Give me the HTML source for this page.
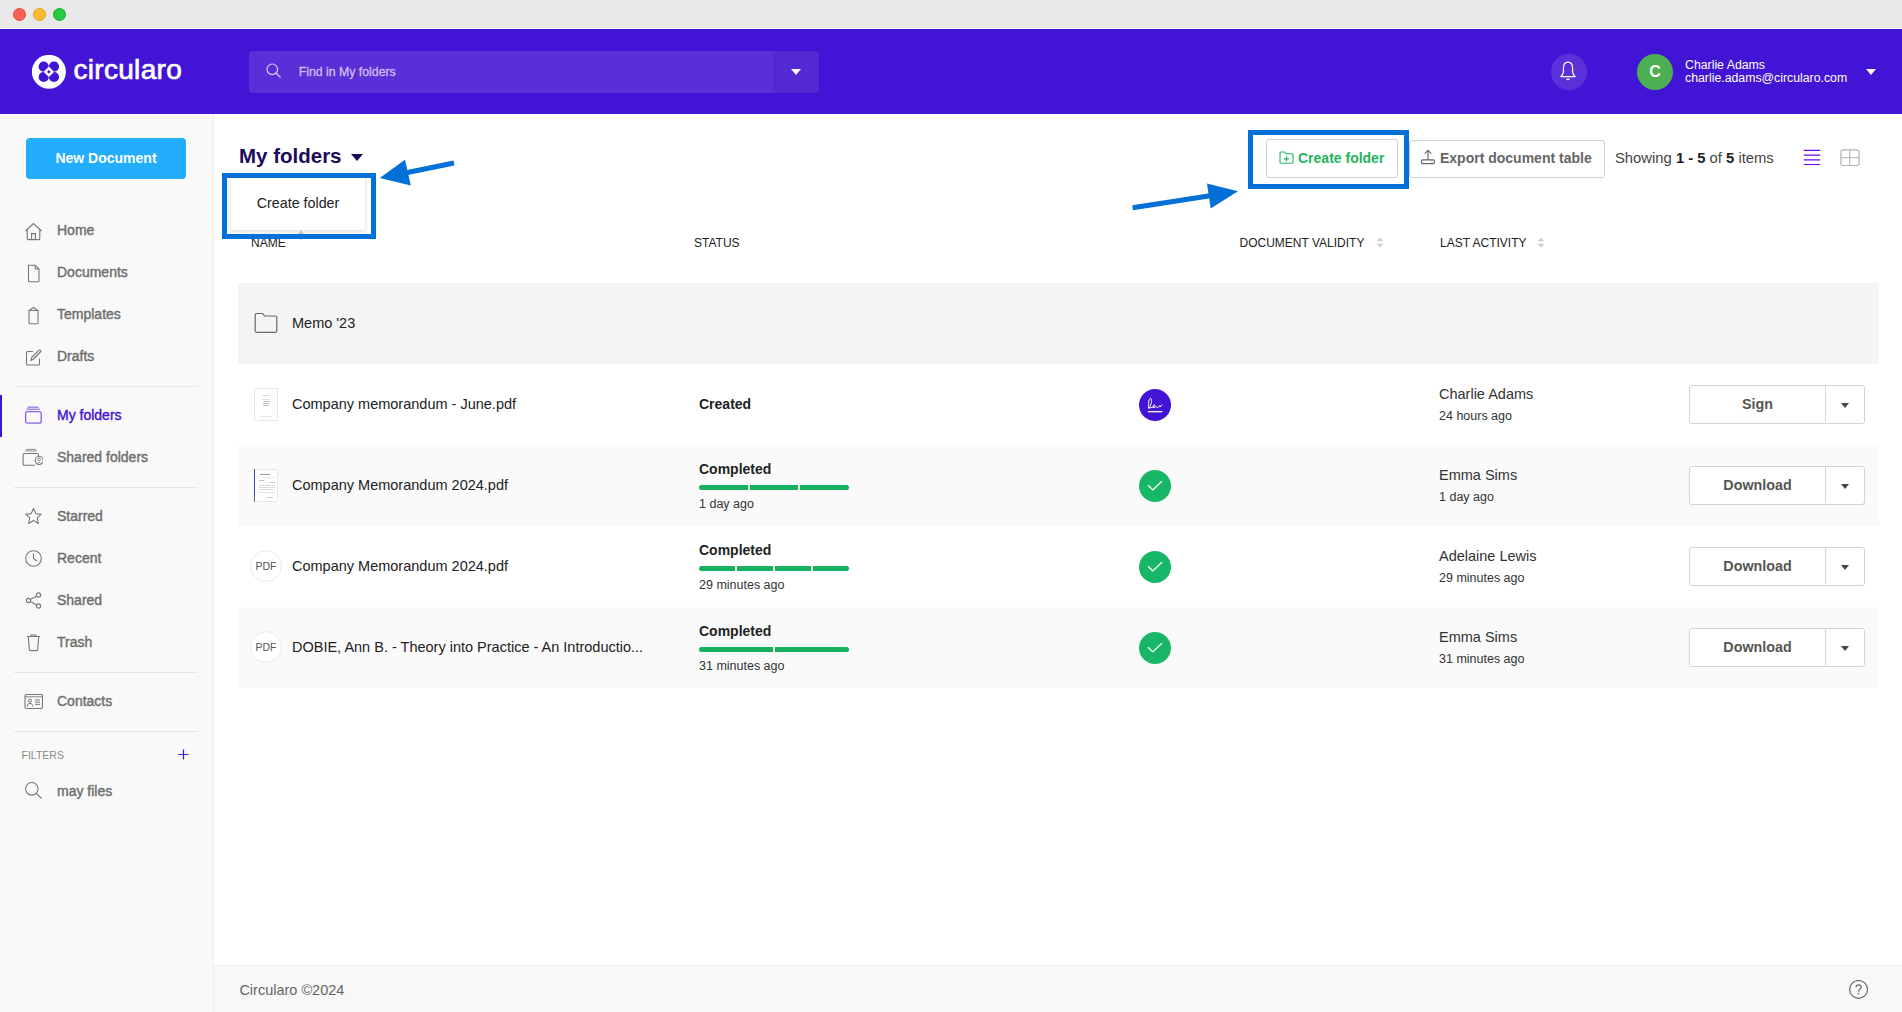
<!DOCTYPE html>
<html><head><meta charset="utf-8">
<style>
*{box-sizing:border-box;margin:0;padding:0}
html,body{width:1902px;height:1012px;overflow:hidden;background:#fff;font-family:"Liberation Sans",sans-serif;}
.a{position:absolute;white-space:nowrap;line-height:1}
#titlebar{position:absolute;left:0;top:0;width:1902px;height:29px;background:#e8e8e8;border-bottom:1px solid #f4f4ee}
.tl{position:absolute;top:7.5px;width:13px;height:13px;border-radius:50%}
#header{position:absolute;left:0;top:29px;width:1902px;height:85px;background:#4214d5}
#sidebar{position:absolute;left:0;top:114px;width:214px;height:898px;background:#f9f9f9;border-right:1px solid #ececec}
.nav{position:absolute;left:57px;font-size:14px;font-weight:normal;color:#6e6e6e;line-height:1;-webkit-text-stroke-width:0.4px;margin-top:-1px}
.ico{position:absolute;left:24px;width:19px;height:19px}
.div{position:absolute;left:14px;width:184px;height:1px;background:#e6e6e6}
#footer{position:absolute;left:214px;top:965px;width:1688px;height:47px;background:#f8f8f8;border-top:1px solid #ebebeb}
.row{position:absolute;left:238px;width:1641px;height:81px}
.th{position:absolute;font-size:12px;color:#222;line-height:1;margin-top:-1px}
.fname{position:absolute;left:292px;font-size:14.5px;color:#222;line-height:1}
.stat{position:absolute;left:699px;font-size:14px;font-weight:bold;color:#222;line-height:1}
.ago{position:absolute;font-size:12.5px;color:#333;line-height:1}
.who{position:absolute;left:1439px;font-size:14.5px;color:#333;line-height:1}
.btn{position:absolute;left:1689px;width:176px;height:38.6px;border:1px solid #d3d3d3;border-radius:3px;background:#fff}
.btn .lbl{position:absolute;left:0;width:135px;top:0;height:36px;line-height:36px;text-align:center;font-size:14.3px;font-weight:bold;color:#555}
.btn .sep{position:absolute;left:135px;top:0;width:1px;height:36px;background:#d3d3d3}
.btn .car{position:absolute;left:150.5px;top:16.5px;width:0;height:0;border-left:4.5px solid transparent;border-right:4.5px solid transparent;border-top:5px solid #444}
.bar{position:absolute;left:699px;height:5px;width:150px}
.bar span{position:absolute;top:0;height:5px;background:#17b25f}
.okc{position:absolute;left:1139px;width:32px;height:32px;border-radius:50%;background:#18b767}
.pdfc{position:absolute;left:250px;width:32px;height:32px;border-radius:50%;border:1px solid #ebebeb;background:#fff;font-size:10.5px;color:#555;text-align:center;line-height:30px}
.thumb{position:absolute;left:254px;width:24px;height:33px;border:1px solid #e4e4e4;background:#fff}
</style></head><body>

<div id="titlebar">
  <div class="tl" style="left:12.5px;background:#fe5f57;border:0.5px solid #e2463f"></div>
  <div class="tl" style="left:32.5px;background:#febc2e;border:0.5px solid #e1a116"></div>
  <div class="tl" style="left:52.5px;background:#28c840;border:0.5px solid #1aab29"></div>
</div>

<div id="header">
  <!-- logo -->
  <svg class="a" style="left:32px;top:26px" width="34" height="34" viewBox="0 0 34 34">
    <circle cx="16.9" cy="16.8" r="17" fill="#fff"/>
    <g fill="#4214d5">
      <path d="M16.8 11.6 L11.7 16.7 A5.1 5.1 0 1 1 16.8 11.6 Z"/>
      <path d="M22 16.7 L16.9 11.6 A5.1 5.1 0 1 1 22 16.7 Z"/>
      <path d="M11.7 16.9 L16.8 22 A5.1 5.1 0 1 1 11.7 16.9 Z"/>
      <path d="M16.9 22 L22 16.9 A5.1 5.1 0 1 1 16.9 22 Z"/>
      <circle cx="16.85" cy="16.8" r="1.5"/>
    </g>
  </svg>
  <div class="a" style="left:73.5px;top:26.5px;font-size:28px;color:#fff;-webkit-text-stroke:0.7px #fff;letter-spacing:0.3px">circularo</div>

  <!-- search -->
  <div class="a" style="left:249px;top:22px;width:570px;height:41.5px;background:#5a2fd8;border-radius:4px"></div>
  <div class="a" style="left:773px;top:22px;width:46px;height:41.5px;background:#5329d3;border-radius:0 4px 4px 0"></div>
  <div class="a" style="left:791px;top:40px;width:0;height:0;border-left:5px solid transparent;border-right:5px solid transparent;border-top:6px solid #fff"></div>
  <svg class="a" style="left:266px;top:34px" width="16" height="16" viewBox="0 0 16 16"><circle cx="6.3" cy="6.3" r="5.3" fill="none" stroke="#d6cbf7" stroke-width="1.2"/><line x1="10" y1="10" x2="14.5" y2="14.5" stroke="#d6cbf7" stroke-width="1.2"/></svg>
  <div class="a" style="left:298.7px;top:37px;font-size:12.3px;color:#cdbff5;-webkit-text-stroke-width:0.3px">Find in My folders</div>

  <!-- bell -->
  <div class="a" style="left:1551px;top:25px;width:36px;height:36px;border-radius:50%;background:#5a31d9"></div>
  <svg class="a" style="left:1559px;top:32px" width="18" height="20" viewBox="0 0 18 20"><path d="M9 1.2 C5.6 1.2 4.4 4 4.4 7.5 L4.4 11 C4.4 13 2.6 14.4 2 15.6 L16 15.6 C15.4 14.4 13.6 13 13.6 11 L13.6 7.5 C13.6 4 12.4 1.2 9 1.2 Z" fill="none" stroke="#fff" stroke-width="1.2"/><path d="M7.2 17.6 L9 18.8 L10.8 17.6" fill="none" stroke="#fff" stroke-width="1.1"/></svg>

  <!-- avatar -->
  <div class="a" style="left:1637px;top:25px;width:36px;height:36px;border-radius:50%;background:#4caf50;color:#fff;font-weight:bold;font-size:16px;text-align:center;line-height:36px">C</div>
  <div class="a" style="left:1685px;top:30px;font-size:12.3px;color:#fff">Charlie Adams</div>
  <div class="a" style="left:1685px;top:43px;font-size:12.3px;color:#fff">charlie.adams@circularo.com</div>
  <div class="a" style="left:1866px;top:40px;width:0;height:0;border-left:5px solid transparent;border-right:5px solid transparent;border-top:6px solid #fff"></div>
</div>

<div id="sidebar"></div>
<div id="footer"></div>

<!-- SIDEBAR -->
<div class="a" style="left:26px;top:138px;width:160px;height:41px;background:#22adfd;border-radius:4px;color:#fff;font-weight:bold;font-size:14px;text-align:center;line-height:41px">New Document</div>

<svg class="ico" style="top:222px" viewBox="0 0 19 19"><path d="M1.5 9 L9.5 1.5 L17.5 9 M3.2 7.6 V16.6 Q3.2 17.6 4.2 17.6 H14.8 Q15.8 17.6 15.8 16.6 V7.6 M7.6 17.6 V11.6 H11.4 V17.6" fill="none" stroke="#777" stroke-width="1.1"/></svg>
<div class="nav" style="top:224px">Home</div>

<svg class="ico" style="top:264px" viewBox="0 0 19 19"><path d="M4.5 1.2 H11.2 L15 5 V16.8 Q15 17.8 14 17.8 H5.5 Q4.5 17.8 4.5 16.8 Z M11.2 1.2 V5 H15" fill="none" stroke="#777" stroke-width="1.1"/></svg>
<div class="nav" style="top:266px">Documents</div>

<svg class="ico" style="top:306px" viewBox="0 0 19 19"><path d="M5 4.5 L9.5 1.5 L14 4.5 V16.8 Q14 17.8 13 17.8 H6 Q5 17.8 5 16.8 Z M5 4.5 H14" fill="none" stroke="#777" stroke-width="1.1"/></svg>
<div class="nav" style="top:308px">Templates</div>

<svg class="ico" style="top:348px" viewBox="0 0 19 19"><path d="M9 3.5 H3.5 Q2.5 3.5 2.5 4.5 V16 Q2.5 17 3.5 17 H14.5 Q15.5 17 15.5 16 V10.5 M7 12.5 L7.6 9.6 L14.8 2.4 Q15.6 1.6 16.4 2.4 Q17.2 3.2 16.4 4 L9.2 11.2 Z" fill="none" stroke="#777" stroke-width="1.1"/></svg>
<div class="nav" style="top:350px">Drafts</div>

<div class="div" style="top:386px"></div>

<div class="a" style="left:0;top:395px;width:2px;height:42px;background:#4214d5"></div>
<svg class="ico" style="top:406px" viewBox="0 0 19 19"><path d="M3.6 1.2 H14.5 M2.3 3.2 H15.8" stroke="#5a2be0" stroke-width="0.8" fill="none"/><rect x="1.6" y="5.6" width="15.6" height="11.6" rx="2" fill="none" stroke="#8a5cf0" stroke-width="1.3"/></svg>
<div class="nav" style="top:409px;color:#4214d5">My folders</div>

<svg class="ico" style="top:448px;width:21px;left:22px" viewBox="0 0 21 19"><path d="M4 1.4 H14 M3 2.9 H15" stroke="#777" stroke-width="0.8" fill="none"/><path d="M13 17.3 H2.6 Q1.1 17.3 1.1 15.8 V7 Q1.1 5.5 2.6 5.5 H15 Q16.5 5.5 16.5 7 V8.5" fill="none" stroke="#777" stroke-width="1.1"/><circle cx="17.2" cy="12.5" r="4" fill="#f9f9f9" stroke="#777" stroke-width="1.1"/><circle cx="17.2" cy="11.5" r="1.3" fill="none" stroke="#777" stroke-width="0.8"/><path d="M15 15.5 Q17.2 13.5 19.4 15.5" fill="none" stroke="#777" stroke-width="0.8"/></svg>
<div class="nav" style="top:451px">Shared folders</div>

<div class="div" style="top:487px"></div>

<svg class="ico" style="top:507px" viewBox="0 0 19 19"><path d="M9.5 1.5 L11.8 6.6 L17.3 7.2 L13.2 10.9 L14.3 16.4 L9.5 13.6 L4.7 16.4 L5.8 10.9 L1.7 7.2 L7.2 6.6 Z" fill="none" stroke="#777" stroke-width="1.1" stroke-linejoin="round"/></svg>
<div class="nav" style="top:510px">Starred</div>

<svg class="ico" style="top:549px" viewBox="0 0 19 19"><circle cx="9.5" cy="9.5" r="7.8" fill="none" stroke="#777" stroke-width="1.1"/><path d="M9.5 4.5 V9.5 L13 12" fill="none" stroke="#777" stroke-width="1.1"/></svg>
<div class="nav" style="top:552px">Recent</div>

<svg class="ico" style="top:591px" viewBox="0 0 19 19"><circle cx="14.5" cy="4" r="2.1" fill="none" stroke="#777" stroke-width="1.1"/><circle cx="4.5" cy="9.5" r="2.1" fill="none" stroke="#777" stroke-width="1.1"/><circle cx="14.5" cy="15" r="2.1" fill="none" stroke="#777" stroke-width="1.1"/><path d="M6.4 8.4 L12.6 5.1 M6.4 10.6 L12.6 13.9" stroke="#777" stroke-width="1.1"/></svg>
<div class="nav" style="top:594px">Shared</div>

<svg class="ico" style="top:633px" viewBox="0 0 19 19"><path d="M3 3.5 H16 M7 3.5 V2 H12 V3.5 M4.3 3.5 L5.3 16.6 Q5.4 17.6 6.4 17.6 H12.6 Q13.6 17.6 13.7 16.6 L14.7 3.5" fill="none" stroke="#777" stroke-width="1.1"/></svg>
<div class="nav" style="top:636px">Trash</div>

<div class="div" style="top:672px"></div>

<svg class="ico" style="top:692px" viewBox="0 0 19 19"><rect x="1" y="2.5" width="17.5" height="14" rx="1.5" fill="none" stroke="#777" stroke-width="1.1"/><path d="M1 4.8 H18.5" stroke="#777" stroke-width="0.9"/><circle cx="6" cy="8.6" r="1.6" fill="none" stroke="#777" stroke-width="1"/><path d="M3 14.5 Q3.5 11.3 6 11.3 Q8.5 11.3 9 14.5 M11 8 H16 M11 10.2 H16 M11 12.4 H16" fill="none" stroke="#777" stroke-width="1"/></svg>
<div class="nav" style="top:695px">Contacts</div>

<div class="div" style="top:731px"></div>

<div class="a" style="left:21.5px;top:749.5px;font-size:10.5px;color:#888">FILTERS</div>
<svg class="a" style="left:178px;top:749px" width="11" height="11" viewBox="0 0 11 11"><path d="M5.5 0.5 V10.5 M0.5 5.5 H10.5" stroke="#4214d5" stroke-width="1.2"/></svg>

<svg class="ico" style="top:781px" viewBox="0 0 19 19"><circle cx="7.8" cy="7.8" r="6.3" fill="none" stroke="#777" stroke-width="1.1"/><path d="M12.3 12.3 L17.5 17.5" stroke="#777" stroke-width="1.1"/></svg>
<div class="nav" style="top:785px">may files</div>



<!-- MAIN TOP -->
<div class="a" style="left:239px;top:146px;font-size:20.5px;font-weight:bold;color:#1b0c5a">My folders</div>
<div class="a" style="left:351px;top:154px;width:0;height:0;border-left:6px solid transparent;border-right:6px solid transparent;border-top:7.5px solid #1b0c5a"></div>

<!-- toolbar -->
<div class="a" style="left:1266px;top:139px;width:132px;height:38.5px;border:1px solid #cfcfcf;border-radius:3px;background:#fff"></div>
<svg class="a" style="left:1278.5px;top:150.5px" width="15" height="14" viewBox="0 0 15 14"><path d="M1 2.2 Q1 1 2.2 1 H5.5 L7 2.8 H12.8 Q14 2.8 14 4 V11 Q14 12.2 12.8 12.2 H2.2 Q1 12.2 1 11 Z" fill="none" stroke="#22b45e" stroke-width="1.1"/><path d="M7.5 5.3 V10.3 M5 7.8 H10" stroke="#22b45e" stroke-width="1.2"/></svg>
<div class="a" style="left:1298px;top:151px;font-size:14px;font-weight:bold;color:#22b45e">Create folder</div>

<div class="a" style="left:1409px;top:139.5px;width:195.5px;height:38px;border:1px solid #cfcfcf;border-radius:3px;background:#fff"></div>
<svg class="a" style="left:1420px;top:149px" width="16" height="16" viewBox="0 0 16 16"><path d="M8 11 V1.5 M4.8 4.7 L8 1.4 L11.2 4.7" fill="none" stroke="#666" stroke-width="1.1"/><rect x="1.5" y="10.9" width="13" height="3.7" rx="1" fill="none" stroke="#666" stroke-width="1.1"/><circle cx="12" cy="12.75" r="0.6" fill="#666"/></svg>
<div class="a" style="left:1440px;top:151px;font-size:14px;font-weight:bold;color:#666">Export document table</div>

<div class="a" style="left:1615px;top:150.5px;font-size:14.8px;color:#444">Showing <b style="color:#222">1 - 5</b> of <b style="color:#222">5</b> items</div>

<svg class="a" style="left:1803px;top:149px" width="18" height="17" viewBox="0 0 18 17"><path d="M0.8 1.4 H17.2 M0.8 6.1 H17.2 M0.8 10.9 H17.2 M0.8 15.5 H17.2" stroke="#6a0af2" stroke-width="1.2"/></svg>
<svg class="a" style="left:1840px;top:149px" width="20" height="17" viewBox="0 0 20 17"><rect x="0.9" y="0.9" width="18.2" height="15.6" rx="2.2" fill="none" stroke="#b3b3b3" stroke-width="1.2"/><path d="M9.7 0.9 V16.5 M0.9 8.7 H19.1" stroke="#b3b3b3" stroke-width="1.1"/></svg>

<!-- table header -->
<div class="th" style="left:251px;top:238px">NAME</div>
<svg class="a" style="left:297px;top:230px" width="8" height="11" viewBox="0 0 8 11"><path d="M4 0.5 L7.5 4.2 H0.5 Z M4 10.5 L7.5 6.8 H0.5 Z" fill="#cfcfcf"/></svg>
<div class="th" style="left:694px;top:238px">STATUS</div>
<div class="th" style="left:1239.5px;top:238px">DOCUMENT VALIDITY</div>
<svg class="a" style="left:1376px;top:236.5px" width="8" height="11" viewBox="0 0 8 11"><path d="M4 0.5 L7.5 4.2 H0.5 Z M4 10.5 L7.5 6.8 H0.5 Z" fill="#cfcfcf"/></svg>
<div class="th" style="left:1440px;top:238px">LAST ACTIVITY</div>
<svg class="a" style="left:1537px;top:236.5px" width="8" height="11" viewBox="0 0 8 11"><path d="M4 0.5 L7.5 4.2 H0.5 Z M4 10.5 L7.5 6.8 H0.5 Z" fill="#cfcfcf"/></svg>

<!-- rows -->
<div class="row" style="top:283px;background:#f4f4f4"></div>
<div class="row" style="top:364px;background:#fff"></div>
<div class="row" style="top:445px;background:#fafafa"></div>
<div class="row" style="top:526px;background:#fff"></div>
<div class="row" style="top:607px;background:#fafafa"></div>

<!-- row 1 folder -->
<svg class="a" style="left:254px;top:312px" width="24" height="22" viewBox="0 0 24 22"><path d="M1.2 18.8 V3 Q1.2 1.5 2.7 1.5 H7.8 Q8.8 1.5 9.5 2.5 L10.5 4 H21.3 Q22.8 4 22.8 5.5 V18.8 Q22.8 20.3 21.3 20.3 H2.7 Q1.2 20.3 1.2 18.8 Z" fill="none" stroke="#666" stroke-width="1.2"/></svg>
<div class="fname" style="top:316px">Memo '23</div>

<!-- row 2 -->
<div class="thumb" style="top:388px;border-color:#e8e8e8"><div style="position:absolute;left:8px;top:6px;width:6px;height:1px;background:#d5d5d5"></div><div style="position:absolute;left:7px;top:10px;width:8px;height:1px;background:#e2e2e2"></div><div style="position:absolute;left:8px;top:12px;width:7px;height:1px;background:#c0c0c0"></div><div style="position:absolute;left:8px;top:14px;width:7px;height:1px;background:#c8c8c8"></div><div style="position:absolute;left:8px;top:16px;width:6px;height:1px;background:#c0c0c0"></div><div style="position:absolute;left:5px;top:27px;width:12px;height:1px;background:#e2e2e2"></div></div>
<div class="fname" style="top:397px">Company memorandum - June.pdf</div>
<div class="stat" style="top:397px">Created</div>
<div class="a" style="left:1139px;top:389px;width:32px;height:32px;border-radius:50%;background:#4214d5"></div>
<svg class="a" style="left:1147px;top:397px" width="16" height="16" viewBox="0 0 16 16"><path d="M1.5 11.5 C1.8 9 1.2 4 2.5 2 C3.5 0.5 5 1.5 4.5 4.5 C4 8 2.5 11 2 11.2 C3.5 10.8 5 10.5 6 10 C7.5 9.5 8.5 8 7.5 7.8 C6.5 7.6 5.8 9.5 6.3 10.5 C7 11 8.5 10 9.5 9.5 L10.5 10.8 C11.5 10 12.5 9 13 8.5 L13.2 10 C14 9 14.6 8.2 15.3 7.5" fill="none" stroke="#fff" stroke-width="1"/><path d="M0.9 14.7 H15.3" stroke="#fff" stroke-width="1.3"/></svg>
<div class="who" style="top:387px">Charlie Adams</div>
<div class="ago" style="left:1439px;top:410px">24 hours ago</div>
<div class="btn" style="top:385px"><div class="lbl">Sign</div><div class="sep"></div><div class="car"></div></div>

<!-- row 3 -->
<div class="thumb" style="top:469px;border-color:#e8e8e8"><div style="position:absolute;left:-1px;top:-1px;width:1px;height:33px;background:linear-gradient(#2b5a4c,#3848b8 25%,#3848b8 80%,#a87a48)"></div><div style="position:absolute;left:5px;top:4px;width:10px;height:1px;background:#9a9a9a"></div><div style="position:absolute;left:4px;top:7px;width:16px;height:1px;background:#e8e8e8"></div><div style="position:absolute;left:4px;top:10px;width:5px;height:1px;background:#c8c8c8"></div><div style="position:absolute;left:15px;top:12px;width:5px;height:1px;background:#c8c8c8"></div><div style="position:absolute;left:4px;top:15px;width:16px;height:1px;background:#d8d8d8"></div><div style="position:absolute;left:4px;top:17px;width:16px;height:1px;background:#d8d8d8"></div><div style="position:absolute;left:4px;top:19px;width:14px;height:1px;background:#d8d8d8"></div><div style="position:absolute;left:4px;top:22px;width:16px;height:1px;background:#e5e5e5"></div><div style="position:absolute;left:12px;top:27px;width:6px;height:1px;background:#cfcfcf"></div></div>
<div class="fname" style="top:478px">Company Memorandum 2024.pdf</div>
<div class="stat" style="top:462px">Completed</div>
<div class="bar" style="top:485px"><span style="left:0;width:49px;border-radius:2.5px 0 0 2.5px"></span><span style="left:51px;width:48px"></span><span style="left:101px;width:49px;border-radius:0 2.5px 2.5px 0"></span></div>
<div class="ago" style="left:699px;top:498px">1 day ago</div>
<div class="okc" style="top:470px"><svg width="32" height="32" viewBox="0 0 32 32"><path d="M9 15.2 L13.8 19.9 L22.9 11.2" fill="none" stroke="#fff" stroke-width="1.3"/></svg></div>
<div class="who" style="top:468px">Emma Sims</div>
<div class="ago" style="left:1439px;top:491px">1 day ago</div>
<div class="btn" style="top:466px"><div class="lbl">Download</div><div class="sep"></div><div class="car"></div></div>

<!-- row 4 -->
<div class="pdfc" style="top:550px">PDF</div>
<div class="fname" style="top:559px">Company Memorandum 2024.pdf</div>
<div class="stat" style="top:543px">Completed</div>
<div class="bar" style="top:566px"><span style="left:0;width:36px;border-radius:2.5px 0 0 2.5px"></span><span style="left:38px;width:36px"></span><span style="left:76px;width:36px"></span><span style="left:114px;width:36px;border-radius:0 2.5px 2.5px 0"></span></div>
<div class="ago" style="left:699px;top:579px">29 minutes ago</div>
<div class="okc" style="top:551px"><svg width="32" height="32" viewBox="0 0 32 32"><path d="M9 15.2 L13.8 19.9 L22.9 11.2" fill="none" stroke="#fff" stroke-width="1.3"/></svg></div>
<div class="who" style="top:549px">Adelaine Lewis</div>
<div class="ago" style="left:1439px;top:572px">29 minutes ago</div>
<div class="btn" style="top:547px"><div class="lbl">Download</div><div class="sep"></div><div class="car"></div></div>

<!-- row 5 -->
<div class="pdfc" style="top:631px">PDF</div>
<div class="fname" style="top:640px">DOBIE, Ann B. - Theory into Practice - An Introductio...</div>
<div class="stat" style="top:624px">Completed</div>
<div class="bar" style="top:647px"><span style="left:0;width:74px;border-radius:2.5px 0 0 2.5px"></span><span style="left:76px;width:74px;border-radius:0 2.5px 2.5px 0"></span></div>
<div class="ago" style="left:699px;top:660px">31 minutes ago</div>
<div class="okc" style="top:632px"><svg width="32" height="32" viewBox="0 0 32 32"><path d="M9 15.2 L13.8 19.9 L22.9 11.2" fill="none" stroke="#fff" stroke-width="1.3"/></svg></div>
<div class="who" style="top:630px">Emma Sims</div>
<div class="ago" style="left:1439px;top:653px">31 minutes ago</div>
<div class="btn" style="top:628px"><div class="lbl">Download</div><div class="sep"></div><div class="car"></div></div>

<!-- footer -->
<div class="a" style="left:239.4px;top:983px;font-size:14.5px;color:#666">Circularo ©2024</div>
<svg class="a" style="left:1849px;top:980px" width="20" height="20" viewBox="0 0 20 20"><circle cx="9.6" cy="9.4" r="8.9" fill="none" stroke="#666" stroke-width="1.2"/><path d="M7 7.3 Q7 4.8 9.6 4.8 Q12.2 4.8 12.2 7.1 Q12.2 8.6 10.5 9.4 Q9.6 9.9 9.6 11.4" fill="none" stroke="#666" stroke-width="1.2"/><circle cx="9.6" cy="13.6" r="0.8" fill="#666"/></svg>

<!-- dropdown + annotations -->
<div class="a" style="left:231px;top:177px;width:134px;height:53px;background:#fff;border-radius:3px;box-shadow:0 1px 4px rgba(0,0,0,0.18)"></div>
<div class="a" style="left:256.7px;top:196px;font-size:14.3px;color:#222">Create folder</div>
<div class="a" style="left:222px;top:173px;width:154px;height:66px;border:5px solid #0370d8"></div>
<div class="a" style="left:1248px;top:130px;width:161px;height:58.5px;border:5px solid #0370d8"></div>
<svg class="a" style="left:0;top:0" width="1902" height="300" viewBox="0 0 1902 300">
  <line x1="454" y1="163" x2="400" y2="174" stroke="#0370d8" stroke-width="5"/>
  <polygon points="379.7,178.1 405,159.8 410.8,185.4" fill="#0370d8"/>
  <line x1="1132.6" y1="207.8" x2="1215" y2="195" stroke="#0370d8" stroke-width="5"/>
  <polygon points="1238,191.2 1207,183.4 1210.7,208.6" fill="#0370d8"/>
</svg>

</body></html>
